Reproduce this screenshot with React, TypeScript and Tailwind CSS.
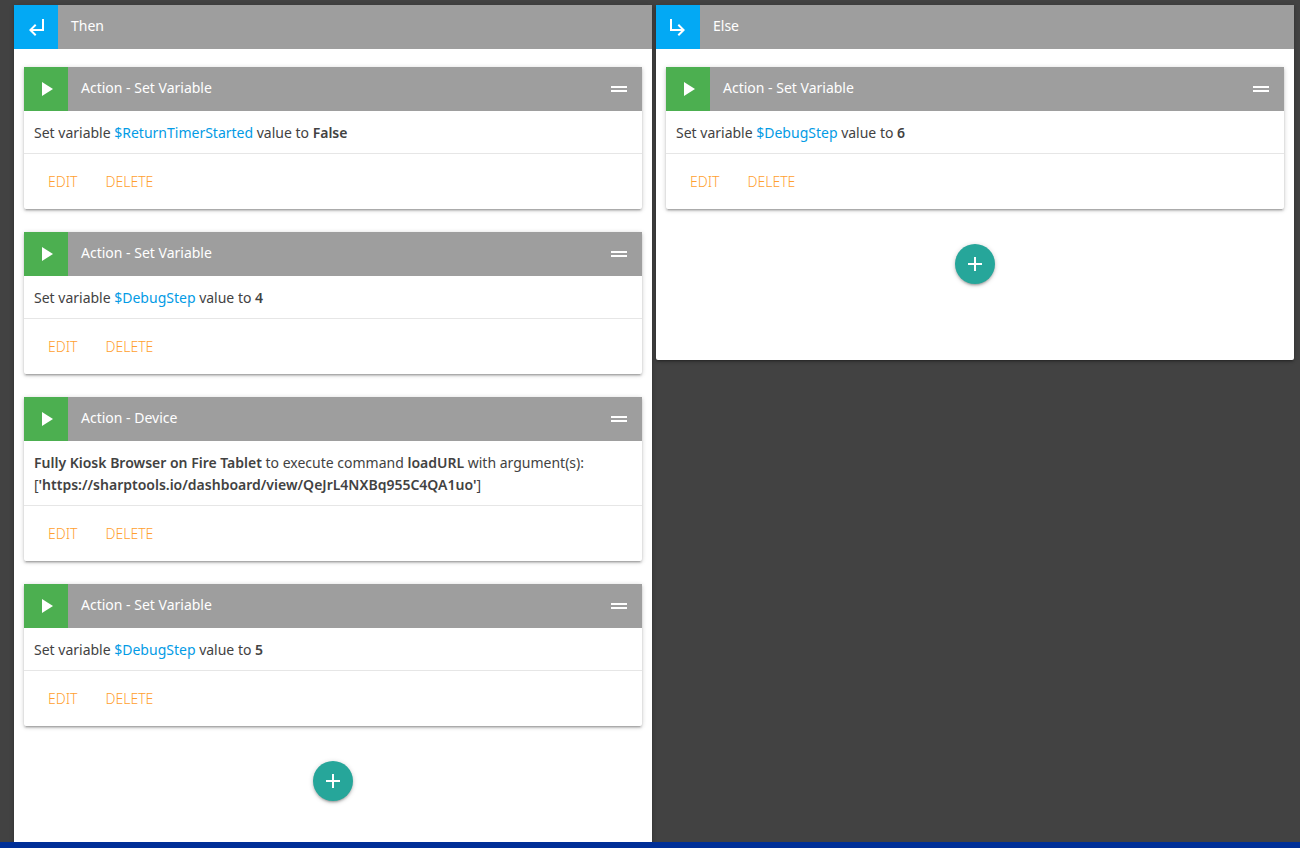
import type { ReactNode } from "react";
import {
  MdAdd,
  MdDragHandle,
  MdPlayArrow,
  MdSubdirectoryArrowLeft,
  MdSubdirectoryArrowRight,
} from "react-icons/md";

type Action = { title: string; body: ReactNode };

function SetVariable({ name, value }: { name: string; value: string }) {
  return (
    <>
      Set variable <span className="text-[#039be5]">{name}</span> value to{" "}
      <b className="font-semibold">{value}</b>
    </>
  );
}

const thenActions: Action[] = [
  { title: "Action - Set Variable", body: <SetVariable name="$ReturnTimerStarted" value="False" /> },
  { title: "Action - Set Variable", body: <SetVariable name="$DebugStep" value="4" /> },
  {
    title: "Action - Device",
    body: (
      <>
        <b className="font-semibold">Fully Kiosk Browser on Fire Tablet</b> to execute command{" "}
        <b className="font-semibold">loadURL</b> with argument(s):
        <br />
        [<b className="font-semibold">'https://sharptools.io/dashboard/view/QeJrL4NXBq955C4QA1uo'</b>]
      </>
    ),
  },
  { title: "Action - Set Variable", body: <SetVariable name="$DebugStep" value="5" /> },
];

const elseActions: Action[] = [
  { title: "Action - Set Variable", body: <SetVariable name="$DebugStep" value="6" /> },
];

function ActionCard({ title, body }: Action) {
  return (
    <article className="rounded-b-xs bg-white shadow-[0_2px_2px_0_rgba(0,0,0,0.14),0_3px_1px_-2px_rgba(0,0,0,0.12),0_1px_5px_0_rgba(0,0,0,0.2)]">
      <header className="flex h-11 items-center bg-[#9e9e9e] text-white">
        <span className="flex size-11 items-center justify-center bg-[#4caf50]">
          <MdPlayArrow size={24} />
        </span>
        <h3 className="flex-1 pb-0.5 pl-[13px]">{title}</h3>
        <button type="button" aria-label="Reorder" className="mr-[11px] cursor-move">
          <MdDragHandle size={24} />
        </button>
      </header>
      <p className="px-2.5 pt-[11px] pb-[9px] text-[#424242]">{body}</p>
      <footer className="flex h-14 items-center gap-7 border-t border-[#e6e6e6] px-6 font-light text-[#ffa02e]">
        <button type="button" className="uppercase">Edit</button>
        <button type="button" className="uppercase">Delete</button>
      </footer>
    </article>
  );
}

function Branch({ title, icon, actions }: { title: string; icon: ReactNode; actions: Action[] }) {
  return (
    <section className="min-w-0 flex-1 rounded-b-xs bg-white shadow-[0_2px_2px_0_rgba(0,0,0,0.14),0_3px_1px_-2px_rgba(0,0,0,0.12),0_1px_5px_0_rgba(0,0,0,0.2)]">
      <header className="flex h-11 items-center bg-[#9e9e9e] text-white">
        <span className="flex size-11 items-center justify-center bg-[#03a9f4]">{icon}</span>
        <h2 className="pb-0.5 pl-[13px]">{title}</h2>
      </header>
      <div className="flex flex-col gap-[23px] px-2.5 pt-[18px]">
        {actions.map((action, i) => (
          <ActionCard key={i} {...action} />
        ))}
      </div>
      <div className="flex justify-center pt-[35px] pb-[76px]">
        <button
          type="button"
          aria-label="Add action"
          className="flex size-10 items-center justify-center rounded-full bg-[#26a69a] text-white shadow-[0_2px_2px_0_rgba(0,0,0,0.14),0_3px_1px_-2px_rgba(0,0,0,0.12),0_1px_5px_0_rgba(0,0,0,0.2)]"
        >
          <MdAdd size={24} />
        </button>
      </div>
    </section>
  );
}

export default function App() {
  return (
    <div className="flex h-screen flex-col bg-[#424242] font-['Noto_Sans',sans-serif] text-[14px] leading-[22px]">
      <main className="flex min-h-0 flex-1 items-start gap-1 overflow-y-auto pt-[5px] pr-1.5 pl-3.5 [scrollbar-width:none]">
        <Branch title="Then" icon={<MdSubdirectoryArrowLeft size={24} />} actions={thenActions} />
        <Branch title="Else" icon={<MdSubdirectoryArrowRight size={24} />} actions={elseActions} />
      </main>
      <div className="h-1.5 shrink-0 bg-[#002f97]" />
    </div>
  );
}
